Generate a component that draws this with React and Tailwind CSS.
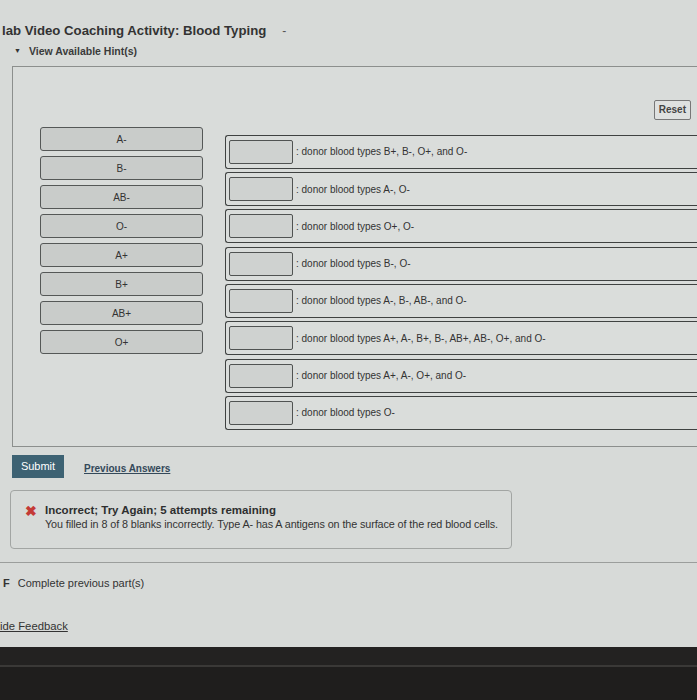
import React from "react";

const left = ["A-", "B-", "AB-", "O-", "A+", "B+", "AB+", "O+"];
const right = [
  ": donor blood types B+, B-, O+, and O-",
  ": donor blood types A-, O-",
  ": donor blood types O+, O-",
  ": donor blood types B-, O-",
  ": donor blood types A-, B-, AB-, and O-",
  ": donor blood types A+, A-, B+, B-, AB+, AB-, O+, and O-",
  ": donor blood types A+, A-, O+, and O-",
  ": donor blood types O-",
];

export default function App() {
  return (
    <div
      className="w-[697px] h-[700px] overflow-hidden bg-[#d7dad8] flex flex-col text-[#2e2f2f]"
      style={{ fontFamily: '"Liberation Sans", Arial, sans-serif' }}
    >
      <div className="pt-[21px] pl-[2px] flex items-center gap-[16px]">
        <span className="text-[13.2px] font-bold text-[#333]">lab Video Coaching Activity: Blood Typing</span>
        <span className="text-[12px] text-[#555]">-</span>
      </div>
      <div className="pl-[14px] mt-[3px] flex items-center gap-[8px] h-[14px]">
        <span className="text-[7px] text-[#333]">▼</span>
        <span className="text-[10.5px] font-bold text-[#3a3b3b] leading-[12px]">View Available Hint(s)</span>
      </div>
      <div className="ml-[12px] mt-[8px] w-[700px] h-[381px] border border-[#8c8f8d] bg-[#d9dcda] flex flex-col">
        <div className="flex justify-end pr-[20px] pt-[33px]">
          <div className="border border-[#777] rounded-[2px] bg-[#dfe1e0] px-[4px] h-[20px] flex items-center text-[10px] font-bold text-[#444]">
            Reset
          </div>
        </div>
        <div className="flex mt-[7px] ml-[27px] gap-[22px]">
          <div className="flex flex-col gap-[5px] w-[163px]">
            {left.map((l) => (
              <div
                key={l}
                className="h-[24px] border-[1.5px] border-[#555857] rounded-[3px] bg-[#c9ccca] flex items-start justify-center pt-[4px] text-[10px] text-[#333]"
              >
                {l}
              </div>
            ))}
          </div>
          <div className="flex flex-col gap-[3.3px] mt-[8px] flex-1">
            {right.map((t) => (
              <div
                key={t}
                className="h-[34px] border-[1.5px] border-r-0 border-[#3f4241] rounded-l-[3px] bg-[#dadddb] flex items-center pl-[3px]"
              >
                <div className="w-[64px] h-[24px] border-[1.5px] border-[#505352] rounded-[2px] bg-[#cfd2d0]" />
                <span className="ml-[3px] text-[10px] text-[#333]">{t}</span>
              </div>
            ))}
          </div>
        </div>
      </div>
      <div className="flex items-center mt-[8px] ml-[12px]">
        <div className="w-[52px] h-[23px] bg-[#3d6273] text-white text-[11px] flex items-center justify-center">
          Submit
        </div>
        <span className="ml-[20px] mt-[4px] text-[10px] font-bold underline text-[#34495a]">Previous Answers</span>
      </div>
      <div className="ml-[10px] mt-[12px] w-[502px] h-[59px] border border-[#a2a5a3] rounded-[4px] flex pl-[14px] pt-[13px]">
        <span className="text-[#c43a36] text-[14px] font-bold leading-[14px]">✖</span>
        <div className="ml-[8px] flex flex-col">
          <span className="text-[11.5px] font-bold text-[#2e2f2f] leading-[13px]">Incorrect; Try Again; 5 attempts remaining</span>
          <span className="text-[10.8px] text-[#333] leading-[14px] tracking-[-0.1px]">
            You filled in 8 of 8 blanks incorrectly. Type A- has A antigens on the surface of the red blood cells.
          </span>
        </div>
      </div>
      <div className="mt-[13px] h-px bg-[#9b9e9c] w-full" />
      <div className="mt-[12px] pl-[3px] text-[11px] text-[#333] flex gap-[8px]">
        <span className="font-bold">F</span>
        <span>Complete previous part(s)</span>
      </div>
      <div className="mt-[27px] text-[11.3px] text-[#333] underline">ide Feedback</div>
      <div className="mt-[12px] flex-1 bg-[#232221] flex flex-col">
        <div className="h-[18px]" />
        <div className="h-[2px] bg-[#3a3937]" />
        <div className="flex-1 bg-[#1f1e1d]" />
      </div>
    </div>
  );
}
